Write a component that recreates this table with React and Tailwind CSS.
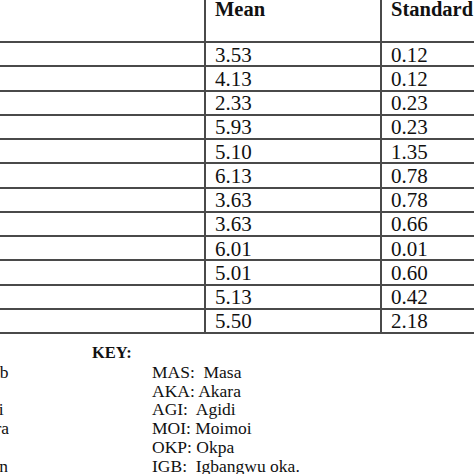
import React from "react";

const rows = [
  ["3.53", "0.12"],
  ["4.13", "0.12"],
  ["2.33", "0.23"],
  ["5.93", "0.23"],
  ["5.10", "1.35"],
  ["6.13", "0.78"],
  ["3.63", "0.78"],
  ["3.63", "0.66"],
  ["6.01", "0.01"],
  ["5.01", "0.60"],
  ["5.13", "0.42"],
  ["5.50", "2.18"],
];

const keyRight = [
  "MAS:  Masa",
  "AKA: Akara",
  "AGI:  Agidi",
  "MOI: Moimoi",
  "OKP: Okpa",
  "IGB:  Igbangwu oka.",
];

function Cut({ w, children }) {
  return (
    <div className={`h-[18.8px] ${w} overflow-hidden flex justify-end whitespace-nowrap text-[17.5px] leading-[18.8px]`}>
      <span className="shrink-0">{children}</span>
    </div>
  );
}

export default function App() {
  return (
    <div
      className="w-[474px] h-[474px] overflow-hidden bg-white text-[#111]"
      style={{ fontFamily: '"Liberation Serif", "Times New Roman", serif' }}
    >
      {/* Table */}
      <div className="w-[474px]">
        <div className="grid grid-cols-[204px_176px_1fr] h-[43px] border-b-2 border-[#4a4a4a]">
          <div />
          <div className="border-l-2 border-[#4a4a4a] pl-[9px] font-bold text-[20.5px] leading-[20px] -mt-[1.5px]">
            Mean
          </div>
          <div className="border-l-2 border-[#4a4a4a] pl-[9px] font-bold text-[20.5px] leading-[20px] -mt-[1.5px] whitespace-nowrap">
            Standard
          </div>
        </div>
        {rows.map((r, i) => (
          <div
            key={i}
            className="grid grid-cols-[204px_176px_1fr] h-[24.25px] border-b-2 border-[#4a4a4a]"
          >
            <div />
            <div className="border-l-2 border-[#4a4a4a] pl-[9px] text-[21px] leading-[22.25px] pt-[0.5px]">
              {r[0]}
            </div>
            <div className="border-l-2 border-[#4a4a4a] pl-[9px] text-[21px] leading-[22.25px] pt-[0.5px]">
              {r[1]}
            </div>
          </div>
        ))}
      </div>

      {/* Key */}
      <div className="mt-[10px]">
        <div className="pl-[92px] font-bold text-[16.5px] leading-[18.8px]">KEY:</div>
        <div className="flex">
          <div className="w-[10px] flex flex-col">
            <Cut w="w-[8.5px]">Ob</Cut>
            <Cut w="w-[8px]">{""}</Cut>
            <Cut w="w-[3.5px]">Ei</Cut>
            <Cut w="w-[9px]">Kara</Cut>
            <Cut w="w-[8px]">{""}</Cut>
            <Cut w="w-[8px]">Kun</Cut>
          </div>
          <div className="ml-[142px] flex flex-col">
            {keyRight.map((t, i) => (
              <div
                key={i}
                className="h-[18.8px] text-[17.5px] leading-[18.8px] whitespace-pre"
              >
                {t}
              </div>
            ))}
          </div>
        </div>
      </div>
    </div>
  );
}
